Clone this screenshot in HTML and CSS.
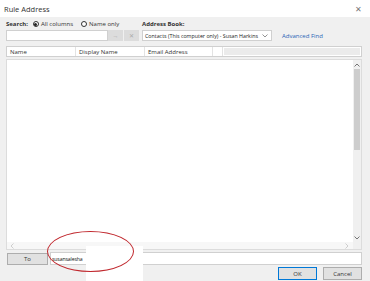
FILE: index.html
```html
<!DOCTYPE html>
<html lang="en">
<head>
  <meta charset="UTF-8" />
  <title>Rule Address</title>
  <link rel="stylesheet" href="styles.css">
</head>
<body>
  <div class="dialog">
    <div class="titlebar">
      <span class="title">Rule Address</span>
      <span class="close">✕</span>
    </div>

    <div class="top">
      <div class="search-col">
        <div class="labels">
          <b>Search:</b>
          <span class="radio on"></span><span>All columns</span>
          <span class="radio"></span><span>Name only</span>
        </div>
        <div class="search-row">
          <div class="field search-box"></div>
          <div class="tool-btn">&#8594;</div>
          <div class="tool-btn">&#10005;</div>
        </div>
      </div>
      <div class="book-col">
        <div class="labels"><b>Address Book:</b></div>
        <div class="book-row">
          <div class="field select">
            <span>Contacts (This computer only) - Susan Harkins</span>
            <svg width="6" height="4" viewBox="0 0 6 4"><path d="M0.5 0.5 L3 3 L5.5 0.5" fill="none" stroke="#666" stroke-width="0.7"/></svg>
          </div>
          <a class="adv-find">Advanced Find</a>
        </div>
      </div>
    </div>

    <div class="header">
      <div class="col col-name">Name</div>
      <div class="col col-display">Display Name</div>
      <div class="col col-email">Email Address</div>
      <div class="col col-gap"></div>
      <div class="col col-rest"></div>
    </div>

    <div class="list">
      <div class="list-body"></div>
      <div class="vscroll">
        <svg width="6" height="4" viewBox="0 0 6 4"><path d="M0.5 3.5 L3 1 L5.5 3.5" fill="none" stroke="#555" stroke-width="0.8"/></svg>
        <div class="thumb"></div>
        <div class="spacer"></div>
        <svg width="6" height="4" viewBox="0 0 6 4"><path d="M0.5 0.5 L3 3 L5.5 0.5" fill="none" stroke="#555" stroke-width="0.8"/></svg>
      </div>
      <div class="hscroll">
        <svg width="4" height="6" viewBox="0 0 4 6"><path d="M3.5 0.5 L1 3 L3.5 5.5" fill="none" stroke="#bbb" stroke-width="0.7"/></svg>
        <svg width="4" height="6" viewBox="0 0 4 6"><path d="M0.5 0.5 L3 3 L0.5 5.5" fill="none" stroke="#bbb" stroke-width="0.7"/></svg>
      </div>
      <div class="corner"></div>
    </div>

    <div class="to-row">
      <div class="btn to-btn">To</div>
      <div class="field to-field">susansalesha</div>
    </div>

    <div class="actions">
      <div class="btn ok">OK</div>
      <div class="btn">Cancel</div>
    </div>

    <div class="redact"></div>
    <div class="circle"></div>
  </div>
</body>
</html>
```

FILE: styles.css
```css
body {
  margin: 0;
  font-family: "Open Sans", "Noto Sans", sans-serif;
  color: #333;
}
.dialog {
  position: relative;
  width: 370px;
  height: 281px;
  background: #f0f0f0;
  overflow: hidden;
}
.titlebar {
  height: 17px;
  background: #fff;
  display: flex;
  align-items: center;
  justify-content: space-between;
  padding: 0 8px 0 4px;
  font-size: 7.5px;
}
.close {
  font-size: 8px;
  color: #777;
}
.top {
  display: flex;
  padding: 0 6px;
  margin-top: 2px;
}
.search-col {
  width: 136px;
}
.labels {
  height: 10px;
  display: flex;
  align-items: center;
  font-size: 6px;
  gap: 2px;
}
.labels b {
  font-weight: 700;
  margin-right: 3px;
}
.radio {
  width: 6px;
  height: 6px;
  border: 0.7px solid #333;
  border-radius: 50%;
  box-sizing: border-box;
  background: #fff;
  display: inline-flex;
  align-items: center;
  justify-content: center;
}
.radio + span {
  margin-right: 6px;
}
.radio.on::after {
  content: "";
  width: 3px;
  height: 3px;
  border-radius: 50%;
  background: #222;
}
.search-row, .book-row {
  display: flex;
  align-items: center;
  height: 11px;
  margin-top: 1px;
}
.field {
  background: #fff;
  border: 1px solid #d0d0d0;
  box-sizing: border-box;
  height: 11px;
}
.search-box {
  width: 102px;
}
.tool-btn {
  width: 15px;
  height: 11px;
  background: #dcdcdc;
  color: #aaa;
  font-size: 6px;
  display: flex;
  align-items: center;
  justify-content: center;
  margin-right: 1px;
}
.select {
  width: 130px;
  display: flex;
  align-items: center;
  justify-content: space-between;
  padding: 0 3px 0 2px;
  font-size: 5.3px;
  white-space: nowrap;
  color: #222;
}
.adv-find {
  margin-left: 10px;
  font-size: 6px;
  color: #2a64b6;
}
.header {
  display: flex;
  height: 11px;
  margin: 5px 8px 0 6px;
  background: #fff;
  border: 1px solid #d0d0d0;
  box-sizing: border-box;
  font-size: 6px;
}
.col {
  display: flex;
  align-items: center;
  padding-left: 3px;
  border-right: 1px solid #e3e3e3;
  box-sizing: border-box;
}
.col-name { width: 69px; }
.col-display { width: 69px; }
.col-email { width: 68px; }
.col-gap { width: 10px; }
.col-rest {
  flex: 1;
  background: #ebebeb;
  border: 1px solid #fff;
}
.list {
  display: grid;
  grid-template-columns: 1fr 8px;
  grid-template-rows: 1fr 7px;
  height: 191px;
  margin: 2px 8px 0 6px;
  background: #fff;
  border: 1px solid #dcdcdc;
  box-sizing: border-box;
}
.vscroll {
  display: flex;
  flex-direction: column;
  align-items: center;
  background: #f0f0f0;
  padding-top: 3px;
}
.thumb {
  width: 6px;
  height: 81px;
  margin-top: 2px;
  background: #cdcdcd;
}
.spacer { flex: 1; }
.vscroll svg:last-child { margin-bottom: 2px; }
.hscroll {
  display: flex;
  align-items: center;
  justify-content: space-between;
  padding: 0 4px 0 3px;
  background: #f7f7f7;
}
.corner { background: #f0f0f0; }
.to-row {
  display: flex;
  align-items: center;
  gap: 2px;
  margin: 2px 8px 0 7px;
  height: 13px;
}
.btn {
  height: 12px;
  width: 39px;
  background: #e1e1e1;
  border: 1px solid #adadad;
  box-sizing: border-box;
  font-size: 6px;
  display: flex;
  align-items: center;
  justify-content: center;
}
.to-btn { width: 41px; }
.to-field {
  flex: 1;
  height: 13px;
  font-size: 5.1px;
  padding-left: 1px;
  display: flex;
  align-items: center;
  color: #111;
  letter-spacing: -0.1px;
}
.actions {
  display: flex;
  justify-content: flex-end;
  gap: 6px;
  margin: 2px 8px 0 0;
}
.actions .btn {
  height: 13px;
}
.ok {
  border-color: #0078d7;
}
.redact {
  position: absolute;
  left: 86px;
  top: 246px;
  width: 57px;
  height: 35px;
  background: #fff;
}
.circle {
  position: absolute;
  left: 47px;
  top: 231px;
  width: 87px;
  height: 41px;
  border: 1.6px solid #c0272d;
  border-radius: 50%;
  box-sizing: border-box;
}
```
